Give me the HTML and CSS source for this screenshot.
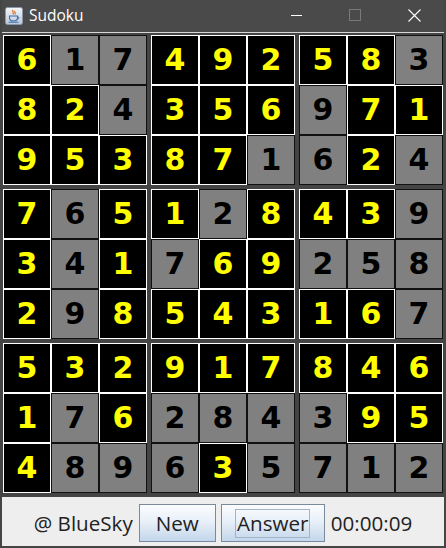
FILE: index.html
```html
<!DOCTYPE html>
<html>
<head>
<meta charset="utf-8">
<title>Sudoku</title>
<link rel="stylesheet" href="styles.css">
</head>
<body>
<div class="window">
  <div class="titlebar">
    <svg class="app-icon" width="18" height="18" viewBox="0 0 18 18">
      <defs>
        <linearGradient id="ig" x1="0" y1="0" x2="0" y2="1">
          <stop offset="0" stop-color="#f4f7fb"/>
          <stop offset="1" stop-color="#b9c7d8"/>
        </linearGradient>
      </defs>
      <rect x="0.5" y="0.5" width="17" height="17" rx="2" fill="url(#ig)" stroke="#8a97a6"/>
      <path d="M8 3 C6.5 4.5 9.5 5.5 8 7.5 M10 4 C9 5.2 11 6 10 7.5" stroke="#e06a1a" stroke-width="1.2" fill="none"/>
      <path d="M4.5 9 H12.5 V11 C12.5 13 11 14 8.5 14 C6 14 4.5 13 4.5 11 Z" fill="none" stroke="#3d6fa8" stroke-width="1.1"/>
      <path d="M12.5 9.8 C14.5 9.8 14.5 12 12.3 12" fill="none" stroke="#3d6fa8" stroke-width="1"/>
      <path d="M3.5 15.2 H13.5" stroke="#3d6fa8" stroke-width="1"/>
    </svg>
    <span class="title">Sudoku</span>
    <div class="controls">
      <span class="ctl ctl-min"><svg width="12" height="12" viewBox="0 0 12 12"><path d="M0 6.5 H11" stroke="#ffffff" stroke-width="1"/></svg></span>
      <span class="ctl ctl-max"><svg width="12" height="12" viewBox="0 0 12 12"><rect x="0.5" y="0.5" width="11" height="11" fill="none" stroke="#7a7a7a" stroke-width="1"/></svg></span>
      <span class="ctl ctl-close"><svg width="13" height="13" viewBox="0 0 13 13"><path d="M0.5 0.5 L12.5 12.5 M12.5 0.5 L0.5 12.5" stroke="#ffffff" stroke-width="1.1"/></svg></span>
    </div>
  </div>
  <div class="sep"></div>
  <div class="board" id="board"></div>
  <div class="bottom">
    <span class="label">@ BlueSky</span>
    <button class="btn btn-new">New</button>
    <button class="btn btn-answer"><span class="focus">Answer</span></button>
    <span class="label time">00:00:09</span>
  </div>
</div>
<script src="app.js"></script>
</body>
</html>
```

FILE: app.js
```js
var rows = [
  "6y1g7g4y9y2y5y8y3g",
  "8y2y4g3y5y6y9g7y1y",
  "9y5y3y8y7y1g6g2y4g",
  "7y6g5y1y2g8y4y3y9g",
  "3y4g1y7g6y9y2g5g8g",
  "2y9g8y5y4y3y1y6y7g",
  "5y3y2y9y1y7y8y4y6y",
  "1y7g6y2g8g4g3g9y5y",
  "4y8g9g6g3y5g7g1g2g"
];
var board = document.getElementById("board");
for (var br = 0; br < 3; br++) {
  for (var bc = 0; bc < 3; bc++) {
    var block = document.createElement("div");
    block.className = "block";
    for (var r = 0; r < 3; r++) {
      for (var c = 0; c < 3; c++) {
        var row = rows[br * 3 + r];
        var col = bc * 3 + c;
        var d = row.charAt(col * 2);
        var t = row.charAt(col * 2 + 1);
        var cell = document.createElement("div");
        cell.className = "cell " + (t === "y" ? "cell-black" : "cell-gray");
        cell.textContent = d;
        block.appendChild(cell);
      }
    }
    board.appendChild(block);
  }
}
```

FILE: styles.css
```css
html, body {
  margin: 0;
  padding: 0;
  background: #454545;
}
.window {
  width: 446px;
  height: 548px;
  box-sizing: border-box;
  background: #464646;
  border-left: 2px solid #454545;
  border-right: 2px solid #454545;
  border-bottom: 2px solid #454545;
  display: flex;
  flex-direction: column;
  overflow: hidden;
}
.titlebar {
  height: 32px;
  flex: 0 0 32px;
  background: #4a4a4a;
  display: flex;
  align-items: center;
  margin: 0 -2px;
  padding-left: 5px;
  box-sizing: border-box;
}
.app-icon {
  display: block;
  margin-top: -1px;
}
.title {
  font-family: "Open Sans", sans-serif;
  font-size: 15.5px;
  color: #ffffff;
  margin-left: 6px;
  margin-top: -2px;
}
.controls {
  margin-left: auto;
  display: flex;
  align-items: center;
  height: 100%;
}
.ctl {
  display: flex;
  align-items: center;
  justify-content: center;
  height: 100%;
}
.ctl svg { display: block; }
.ctl-min { width: 12px; margin-right: 46px; margin-top: -2px; }
.ctl-max { width: 12px; margin-right: 47px; margin-top: -2px; }
.ctl-close { width: 13px; margin-right: 25px; margin-top: -1px; }
.sep {
  height: 1px;
  flex: 0 0 1px;
  background: #d8d8d8;
  margin: 0 -2px;
}
.board {
  flex: 0 0 auto;
  padding: 2px 1px 4px 1px;
  display: grid;
  grid-template-columns: repeat(3, 144px);
  grid-template-rows: repeat(3, 150px);
  gap: 4px;
  background: #444444;
}
.block {
  display: grid;
  grid-template-columns: repeat(3, 48px);
  grid-template-rows: repeat(3, 50px);
}
.cell {
  box-sizing: border-box;
  display: flex;
  align-items: center;
  justify-content: center;
  font-family: "DejaVu Sans", Verdana, sans-serif;
  font-weight: bold;
  font-size: 30px;
  line-height: 1;
}
.cell-black {
  background: #000000;
  color: #ffff00;
  border: 1px solid #ffffff;
}
.cell-gray {
  background: #808080;
  color: #000000;
  border: 1px solid #111111;
}
.bottom {
  flex: 1 1 auto;
  background: #eeeeee;
  display: flex;
  align-items: center;
  justify-content: center;
  padding-top: 3px;
  box-sizing: border-box;
}
.label {
  font-family: "Open Sans", sans-serif;
  font-size: 20.6px;
  color: #222222;
}
.time { margin-left: 6px; }
.btn {
  font-family: "Open Sans", sans-serif;
  font-size: 20.6px;
  color: #222222;
  height: 38px;
  box-sizing: border-box;
  border: 1px solid #7a8a9c;
  border-radius: 0;
  background: linear-gradient(to bottom, #fbfcfe 0%, #e9f0f8 45%, #c3d6eb 100%);
  padding: 0;
  margin: 0;
  display: flex;
  align-items: center;
  justify-content: center;
}
.btn-new {
  width: 77px;
  margin-left: 6px;
}
.btn-answer {
  width: 104px;
  margin-left: 5px;
}
.focus {
  border: 1px solid #a3b4c8;
  padding: 1px 1px 2px 1px;
  line-height: 24px;
}
```
